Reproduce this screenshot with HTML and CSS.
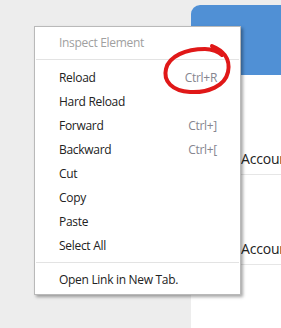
FILE: index.html
```html
<!DOCTYPE html>
<html lang="en">
<head>
<meta charset="UTF-8" />
<meta name="viewport" content="width=device-width, initial-scale=1" />
<title>Context Menu</title>
<link rel="stylesheet" href="styles.css">
</head>
<body>
<div class="panel">
  <div class="panel-header"></div>
  <div class="account-list">
    <div class="account-row"><span class="account-name">Account 1</span></div>
    <div class="account-row"><span class="account-name">Account 2</span></div>
  </div>
</div>

<!-- right-click menu, drawn over the page -->
<ul class="context-menu">
  <li class="menu-item disabled">Inspect Element</li>
  <li class="menu-sep"></li>
  <li class="menu-item">Reload <span class="shortcut">Ctrl+R</span></li>
  <li class="menu-item">Hard Reload</li>
  <li class="menu-item">Forward <span class="shortcut">Ctrl+]</span></li>
  <li class="menu-item">Backward <span class="shortcut">Ctrl+[</span></li>
  <li class="menu-item">Cut</li>
  <li class="menu-item">Copy</li>
  <li class="menu-item">Paste</li>
  <li class="menu-item">Select All</li>
  <li class="menu-sep sep-bottom"></li>
  <li class="menu-item">Open Link in New Tab.</li>
</ul>

<svg class="scribble" width="80" height="64" viewBox="0 0 80 64">
  <path d="M52 8 C62 12, 71 20, 68 34 C65 48, 48 55, 30 54 C12 53, 3 43, 6 31 C9 18, 26 11, 45 11 C52 11, 59 14, 62 17" fill="none" stroke="#e01818" stroke-width="4" stroke-linecap="round" stroke-linejoin="round"/>
</svg>
</body>
</html>
```

FILE: styles.css
```css
body {
  margin: 0;
  padding: 5px 0 0 191px;
  height: 328px;
  box-sizing: border-box;
  background: #ededed;
  font-family: 'Open Sans', 'Noto Sans', sans-serif;
  color: #222;
  overflow: hidden;
}
.panel {
  background: white;
  height: 100%;
  border-top-left-radius: 9px;
  overflow: hidden;
}
.panel-header {
  height: 70px;
  background: #5090d5;
}
.account-list {
  padding-top: 10px;
}
.account-row {
  height: 90px;
  border-bottom: 1px solid #e6e6e6;
  display: flex;
  align-items: flex-end;
  padding-left: 50px;
  box-sizing: border-box;
}
.account-name {
  font-size: 14px;
  line-height: 20px;
  margin-bottom: 5px;
  letter-spacing: -0.2px;
  white-space: nowrap;
}
.context-menu {
  position: absolute;
  left: 34px;
  top: 26px;
  width: 207px;
  box-sizing: border-box;
  margin: 0;
  padding: 4px 0 2px 0;
  list-style: none;
  background: white;
  border: 1px solid #b9b9b9;
  box-shadow: 2px 2px 3px rgb(0 0 0 / 0.35);
  font-size: 12px;
  letter-spacing: -0.3px;
}
.menu-item {
  height: 24px;
  line-height: 24px;
  padding: 0 23px 0 24px;
  display: flex;
  justify-content: space-between;
  white-space: nowrap;
}
.menu-item.disabled {
  color: #a0a0a0;
}
.shortcut {
  color: #868690;
}
.menu-sep {
  height: 1px;
  background: #e3e3e3;
  margin: 4px 1px 6px 1px;
}
.menu-sep.sep-bottom {
  margin-bottom: 5px;
}
.scribble {
  position: absolute;
  left: 160px;
  top: 38px;
}
```
